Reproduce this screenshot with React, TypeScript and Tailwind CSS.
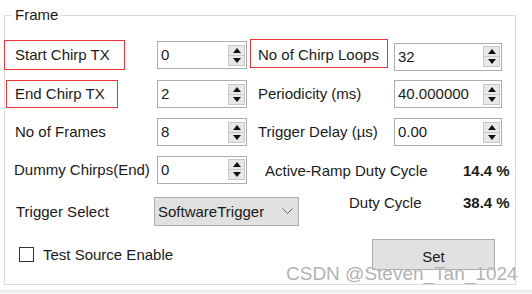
function SpinBox({ value, width }: { value: string; width: string }) {
  return (
    <div className={`flex h-[28px] ${width} items-center border border-[#adadad] bg-white`}>
      <span className="flex-1 pl-[3px] leading-[18px]">{value}</span>
      <div className="mr-[1px] flex h-[21px] w-[17px] flex-col">
        <div className="flex flex-1 items-center justify-center border border-[#c8c8c8] bg-[#e8e8e8]">
          <svg width="8" height="5" viewBox="0 0 8 5">
            <polygon points="0,5 4,0 8,5" fill="#111" />
          </svg>
        </div>
        <div className="flex flex-1 items-center justify-center border border-t-0 border-[#c8c8c8] bg-[#e8e8e8]">
          <svg width="8" height="5" viewBox="0 0 8 5">
            <polygon points="0,0 4,5 8,0" fill="#111" />
          </svg>
        </div>
      </div>
    </div>
  );
}

export default function App() {
  return (
    <div className="relative h-[294px] w-[532px] overflow-hidden bg-white font-['Liberation_Sans',Arial,sans-serif] text-[15px] text-[#1a1a1a]">
      {/* group box */}
      <div className="relative ml-[4px] mt-[15px] h-[270px] w-[512px] border border-[#dcdcdc]">
        <span className="absolute -top-[10px] left-[7px] bg-white px-[3px] leading-[18px]">Frame</span>

        <div className="flex flex-col pt-[23px]">
          {/* row 1 */}
          <div className="relative flex h-[32px] items-center">
            <div className="w-[152px] pl-[10px] leading-[18px]">Start Chirp TX</div>
            <SpinBox value="0" width="w-[90px]" />
            <div className="w-[147px] pl-[11px] leading-[18px]">No of Chirp Loops</div>
            <div className="mt-[3px]">
              <SpinBox value="32" width="w-[108px]" />
            </div>
            <div className="absolute left-[-1px] top-[1px] h-[30px] w-[121px] border border-[#ec3338]" />
            <div className="absolute left-[245px] top-0 h-[29px] w-[138px] border border-[#ec3338]" />
          </div>

          {/* row 2 */}
          <div className="relative mt-[9px] flex h-[28px] items-center">
            <div className="w-[152px] pl-[10px] leading-[18px]">End Chirp TX</div>
            <SpinBox value="2" width="w-[90px]" />
            <div className="w-[147px] pl-[11px] leading-[18px]">Periodicity (ms)</div>
            <SpinBox value="40.000000" width="w-[108px]" />
            <div className="absolute left-[1px] top-0 h-[28px] w-[112px] border border-[#ec3338]" />
          </div>

          {/* row 3 */}
          <div className="mt-[10px] flex h-[28px] items-center">
            <div className="w-[152px] pl-[10px] leading-[18px]">No of Frames</div>
            <SpinBox value="8" width="w-[90px]" />
            <div className="w-[147px] pl-[11px] leading-[18px]">Trigger Delay (µs)</div>
            <SpinBox value="0.00" width="w-[108px]" />
          </div>

          {/* row 4 */}
          <div className="mt-[9px] flex h-[29px] items-center">
            <div className="w-[152px] whitespace-nowrap pl-[9px] leading-[18px]">Dummy Chirps(End)</div>
            <SpinBox value="0" width="w-[90px]" />
            <div className="ml-[18px] mt-[2px] leading-[18px]">Active-Ramp Duty Cycle</div>
            <div className="ml-auto mt-[2px] w-[52px] font-bold leading-[18px]">14.4 %</div>
          </div>

          {/* row 5 */}
          <div className="mt-[12px] flex h-[31px] items-center">
            <div className="w-[149px] pl-[11px] leading-[18px]">Trigger Select</div>
            <div className="flex h-[29px] w-[145px] items-center justify-between border border-[#adadad] bg-[#e1e1e1] pl-[3px] pr-[5px]">
              <span className="leading-[18px]">SoftwareTrigger</span>
              <svg width="11" height="7" viewBox="0 0 11 7">
                <polyline points="0.5,0.5 5.5,5.5 10.5,0.5" fill="none" stroke="#6a6a6a" strokeWidth="1" />
              </svg>
            </div>
            <div className="-mt-[17px] ml-[50px] leading-[18px]">Duty Cycle</div>
            <div className="-mt-[17px] ml-auto w-[52px] font-bold leading-[18px]">38.4 %</div>
          </div>

          {/* row 6 */}
          <div className="mt-[12px] flex h-[31px] items-center">
            <div className="ml-[14px] h-[15px] w-[15px] border border-[#333] bg-white" />
            <span className="ml-[9px] leading-[18px]">Test Source Enable</span>
            <button className="ml-auto mr-[20px] flex h-[31px] w-[123px] items-center justify-center border border-[#adadad] bg-[#e1e1e1] pt-[4px] leading-[18px]">
              Set
            </button>
          </div>
        </div>
      </div>

      <div className="mt-[5px] h-[4px] border-t border-[#e6e6e6] bg-[#f0f0f0]" />

      {/* watermark */}
      <span className="absolute left-[286px] top-[264px] whitespace-nowrap text-[19px] leading-[20px] text-[#b2b2b2] [text-shadow:0_0_1px_#fff]">
        CSDN @Steven_Tan_1024
      </span>
    </div>
  );
}
